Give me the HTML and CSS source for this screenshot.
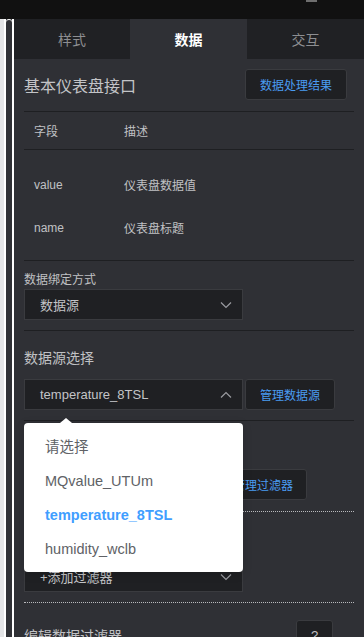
FILE: index.html
```html
<!DOCTYPE html>
<html lang="zh-CN">
<head>
<meta charset="utf-8">
<title>数据</title>
<link rel="stylesheet" href="styles.css">
</head>
<body>
<div class="topbar"><span class="topbar-bit"></span></div>
<div class="main">
  <div class="gutter">
    <span class="g-light"></span><span class="g-white"></span><span class="g-thumb"></span><span class="g-white2"></span>
  </div>
  <div class="panel">
    <div class="tabs">
      <div class="tab">样式</div>
      <div class="tab active">数据</div>
      <div class="tab">交互</div>
    </div>
    <div class="content">
      <div class="head">
        <div class="title">基本仪表盘接口</div>
        <button class="btn btn-head">数据处理结果</button>
      </div>
      <div class="table">
        <div class="thead"><span class="c1">字段</span><span class="c2">描述</span></div>
        <div class="tbody">
          <div class="tr"><span class="c1">value</span><span class="c2">仪表盘数据值</span></div>
          <div class="tr"><span class="c1">name</span><span class="c2">仪表盘标题</span></div>
        </div>
      </div>
      <div class="section sec-bind">
        <div class="label">数据绑定方式</div>
        <div class="select">
          <span>数据源</span>
          <svg class="chev" width="12" height="8" viewBox="0 0 12 8"><polyline points="1,1.5 6,6.5 11,1.5" fill="none" stroke="#9a9ba0" stroke-width="1.2"/></svg>
        </div>
      </div>
      <div class="section sec-source">
        <div class="label label-lg">数据源选择</div>
        <div class="row">
          <div class="select select-open">
            <span>temperature_8TSL</span>
            <svg class="chev" width="12" height="8" viewBox="0 0 12 8"><polyline points="1,6.5 6,1.5 11,6.5" fill="none" stroke="#9a9ba0" stroke-width="1.2"/></svg>
          </div>
          <button class="btn btn-side">管理数据源</button>
        </div>
        <div class="dropdown">
          <span class="dd-arrow"></span>
          <div class="dd-item">请选择</div>
          <div class="dd-item">MQvalue_UTUm</div>
          <div class="dd-item selected">temperature_8TSL</div>
          <div class="dd-item">humidity_wclb</div>
        </div>
      </div>
      <div class="section sec-filter dotted">
        <div class="spacer"></div>
        <div class="row">
          <div class="check"></div>
          <button class="btn btn-filter">管理过滤器</button>
        </div>
      </div>
      <div class="section sec-add dotted">
        <div class="spacer"></div>
        <div class="select">
          <span>+添加过滤器</span>
          <svg class="chev" width="12" height="8" viewBox="0 0 12 8"><polyline points="1,1.5 6,6.5 11,1.5" fill="none" stroke="#9a9ba0" stroke-width="1.2"/></svg>
        </div>
      </div>
      <div class="edit-row">
        <div class="label label-lg">编辑数据过滤器</div>
        <button class="btn btn-q">?</button>
      </div>
    </div>
  </div>
</div>
</body>
</html>
```

FILE: styles.css
```css
* { box-sizing: border-box; }
html, body { margin: 0; padding: 0; }
body {
  width: 364px;
  height: 637px;
  overflow: hidden;
  background: #2f3035;
  font-family: "Liberation Sans", "Noto Sans CJK SC", sans-serif;
  color: #c0c1c4;
}
.topbar {
  height: 19px;
  background: #111111;
  display: flex;
  justify-content: flex-end;
}
.topbar-bit {
  width: 11px;
  height: 2px;
  background: #6e6e6e;
  margin-right: 47px;
}
.main {
  display: flex;
  height: 618px;
}
.gutter {
  width: 14px;
  display: flex;
  flex-shrink: 0;
}
.g-light { width: 4px; background: #e4e5e7; }
.g-white { width: 2px; background: #ffffff; }
.g-thumb {
  width: 6px;
  background: #303136;
  border-radius: 3px 3px 0 0;
  margin-top: 1px;
  box-shadow: 0 -1px 0 #fff;
}
.g-white2 { width: 2px; background: #ffffff; }
.panel {
  flex: 1;
  background: #2f3035;
  min-width: 0;
}
.tabs {
  display: grid;
  grid-template-columns: 116px 117px 117px;
  height: 40px;
}
.tab {
  background: #202124;
  color: #8d8e91;
  font-size: 14px;
  display: flex;
  align-items: center;
  justify-content: center;
}
.tab.active {
  background: #2f3035;
  color: #ffffff;
  font-weight: bold;
}
.content {
  position: relative;
  padding: 10px 10px 0 10px;
}
.head {
  display: flex;
  justify-content: space-between;
  align-items: center;
  height: 31px;
}
.title {
  font-size: 16px;
  color: #c3c4c7;
}
.btn {
  background: #1f2023;
  border: 1px solid #3a3b3f;
  border-radius: 3px;
  color: #4a9cf2;
  font-family: inherit;
  font-size: 12px;
  height: 31px;
  padding: 0;
}
.btn-head { width: 102px; margin-right: 7px; }
.table {
  margin-top: 11px;
  border-top: 1px solid #1e1f22;
  border-bottom: 1px solid #1e1f22;
  font-size: 12px;
  color: #c0c1c4;
}
.thead {
  height: 38px;
  display: flex;
  align-items: center;
  border-bottom: 1px solid #1e1f22;
}
.tbody { padding: 13px 0 11px; }
.tr {
  height: 43px;
  display: flex;
  align-items: center;
}
.c1 { width: 100px; padding-left: 10px; }
.c2 { flex: 1; }
.section { border-bottom: 1px solid #1e1f22; }
.section.dotted { border-bottom: 1px dotted #b9babd; }
.label {
  font-size: 12px;
  line-height: 16px;
  color: #c0c1c4;
}
.label-lg { font-size: 14px; line-height: 20px; }
.spacer { height: 20px; }
.select {
  width: 219px;
  height: 31px;
  background: #1f2023;
  border: 1px solid #3a3b3f;
  display: flex;
  align-items: center;
  justify-content: space-between;
  padding: 0 10px 0 15px;
  font-size: 13px;
  color: #c3c4c7;
}
.sec-bind { padding: 11px 0 10px; }
.sec-bind .select { margin-top: 1px; }
.sec-source { padding: 17px 0 10px; }
.sec-source .row { margin-top: 11px; }
.row { display: flex; gap: 2px; }
.btn-side { width: 90px; }
.sec-filter { padding: 14px 0 11px; }
.sec-filter .row { margin-top: 14px; gap: 0; }
.check { width: 195px; height: 31px; }
.btn-filter { width: 88px; }
.sec-add { padding: 15px 0 10px; }
.sec-add .select { margin-top: 14px; }
.edit-row {
  display: flex;
  justify-content: space-between;
  align-items: center;
  padding: 17px 21px 0 0;
}
.btn-q { width: 37px; color: #c0c1c4; font-size: 13px; }
.dropdown {
  position: absolute;
  left: 10px;
  top: 364px;
  width: 219px;
  background: #ffffff;
  border-radius: 4px;
  padding: 7px 0 6px;
  box-shadow: 0 2px 10px rgba(0,0,0,0.15);
  z-index: 5;
}
.dd-arrow {
  position: absolute;
  left: 36px;
  top: -5px;
  width: 0;
  height: 0;
  border-left: 6px solid transparent;
  border-right: 6px solid transparent;
  border-bottom: 5px solid #ffffff;
}
.dd-item {
  height: 34px;
  line-height: 34px;
  padding-left: 21px;
  font-size: 14.5px;
  color: #606266;
}
.dd-item.selected {
  color: #409eff;
  font-weight: bold;
}
```
